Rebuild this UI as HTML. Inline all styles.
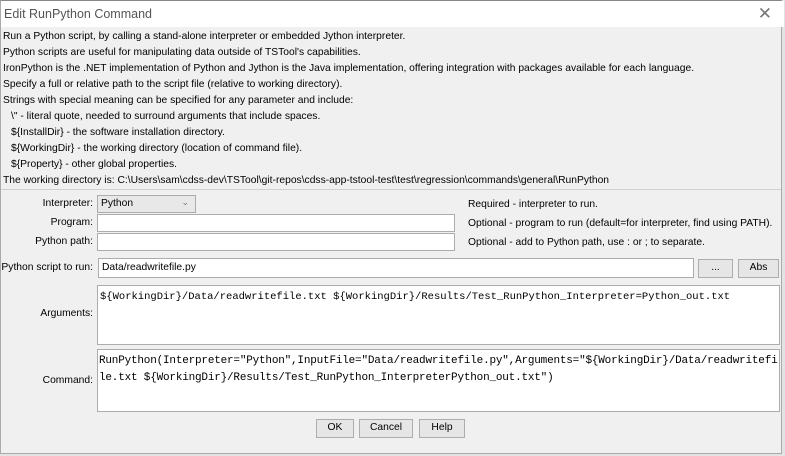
<!DOCTYPE html>
<html><head><style>
body{margin:0;width:785px;height:456px;background:#e3e3e3;position:relative;overflow:hidden;font-family:"Liberation Sans",sans-serif;font-size:10.3px;color:#000}
.dlg{position:absolute;left:0;top:0;width:780px;height:452px;background:#f0f0f0;border:1px solid #aaa;border-top:1px solid #888}
.title{position:absolute;left:0;top:0;width:780px;height:26px;background:#fff;font-size:12.5px;color:#555;line-height:26px;padding-left:3px}
.x{position:absolute;right:12px;top:0px;font-size:17px;color:#777;font-weight:100}
.t{position:absolute;left:2px;white-space:nowrap;margin-top:1px}
.l{position:absolute;text-align:right;white-space:nowrap}
.f{position:absolute;background:#fff;border:1px solid #acacac;box-sizing:border-box;padding:2px 3px;white-space:nowrap;overflow:hidden}
.m{font-family:"Liberation Mono",monospace;font-size:10.5px;line-height:17px;padding:3px 2px}
.b{position:absolute;background:#e6e6e6;border:1px solid #adadad;box-sizing:border-box;text-align:center;line-height:16px}
</style></head><body>
<div class="dlg">
<div class="title">Edit RunPython Command<span class="x">✕</span></div>
<div class="t" style="top:29px">Run a Python script, by calling a stand-alone interpreter or embedded Jython interpreter.</div>
<div class="t" style="top:45px">Python scripts are useful for manipulating data outside of TSTool's capabilities.</div>
<div class="t" style="top:61px">IronPython is the .NET implementation of Python and Jython is the Java implementation, offering integration with packages available for each language.</div>
<div class="t" style="top:77px">Specify a full or relative path to the script file (relative to working directory).</div>
<div class="t" style="top:93px">Strings with special meaning can be specified for any parameter and include:</div>
<div class="t" style="top:109px;left:10px">\" - literal quote, needed to surround arguments that include spaces.</div>
<div class="t" style="top:125px;left:10px">${InstallDir} - the software installation directory.</div>
<div class="t" style="top:141px;left:10px">${WorkingDir} - the working directory (location of command file).</div>
<div class="t" style="top:157px;left:10px">${Property} - other global properties.</div>
<div class="t" style="top:173px">The working directory is: C:\Users\sam\cdss-dev\TSTool\git-repos\cdss-app-tstool-test\test\regression\commands\general\RunPython</div>
<div style="position:absolute;left:0;top:188px;width:780px;border-top:1px solid #d0d0d0"></div>
<div class="l" style="right:688px;top:197px">Interpreter:</div>
<div class="f" style="left:96px;top:194px;width:99px;height:18px;background:#e8e8e8;padding:2px 3px">Python<span style="position:absolute;right:6px;top:1px;color:#777;font-size:9px">&#8964;</span></div>
<div class="t" style="left:467px;top:197px">Required - interpreter to run.</div>
<div class="l" style="right:688px;top:216px">Program:</div>
<div class="f" style="left:96px;top:213px;width:358px;height:18px"></div>
<div class="t" style="left:467px;top:216px">Optional - program to run (default=for interpreter, find using PATH).</div>
<div class="l" style="right:688px;top:235px">Python path:</div>
<div class="f" style="left:96px;top:232px;width:358px;height:18px"></div>
<div class="t" style="left:467px;top:235px">Optional - add to Python path, use : or ; to separate.</div>
<div class="l" style="right:688px;top:261px">Python script to run:</div>
<div class="f" style="left:97px;top:257px;width:596px;height:20px;padding:3px 3px">Data/readwritefile.py</div>
<div class="b" style="left:697px;top:258px;width:35px;height:19px">...</div>
<div class="b" style="left:737px;top:258px;width:41px;height:19px">Abs</div>
<div class="l" style="right:688px;top:307px">Arguments:</div>
<div class="f m" style="left:96px;top:284px;width:683px;height:60px">${WorkingDir}/Data/readwritefile.txt ${WorkingDir}/Results/Test_RunPython_Interpreter=Python_out.txt</div>
<div class="l" style="right:688px;top:374px">Command:</div>
<div class="f m" style="left:96px;top:348px;width:683px;height:63px;font-size:11px;letter-spacing:-0.2px;padding:3px 1px">RunPython(Interpreter="Python",InputFile="Data/readwritefile.py",Arguments="${WorkingDir}/Data/readwritefi<br>le.txt ${WorkingDir}/Results/Test_RunPython_InterpreterPython_out.txt")</div>
<div class="b" style="left:315px;top:418px;width:38px;height:19px">OK</div>
<div class="b" style="left:358px;top:418px;width:54px;height:19px">Cancel</div>
<div class="b" style="left:418px;top:418px;width:46px;height:19px">Help</div>
</div>
</body></html>
